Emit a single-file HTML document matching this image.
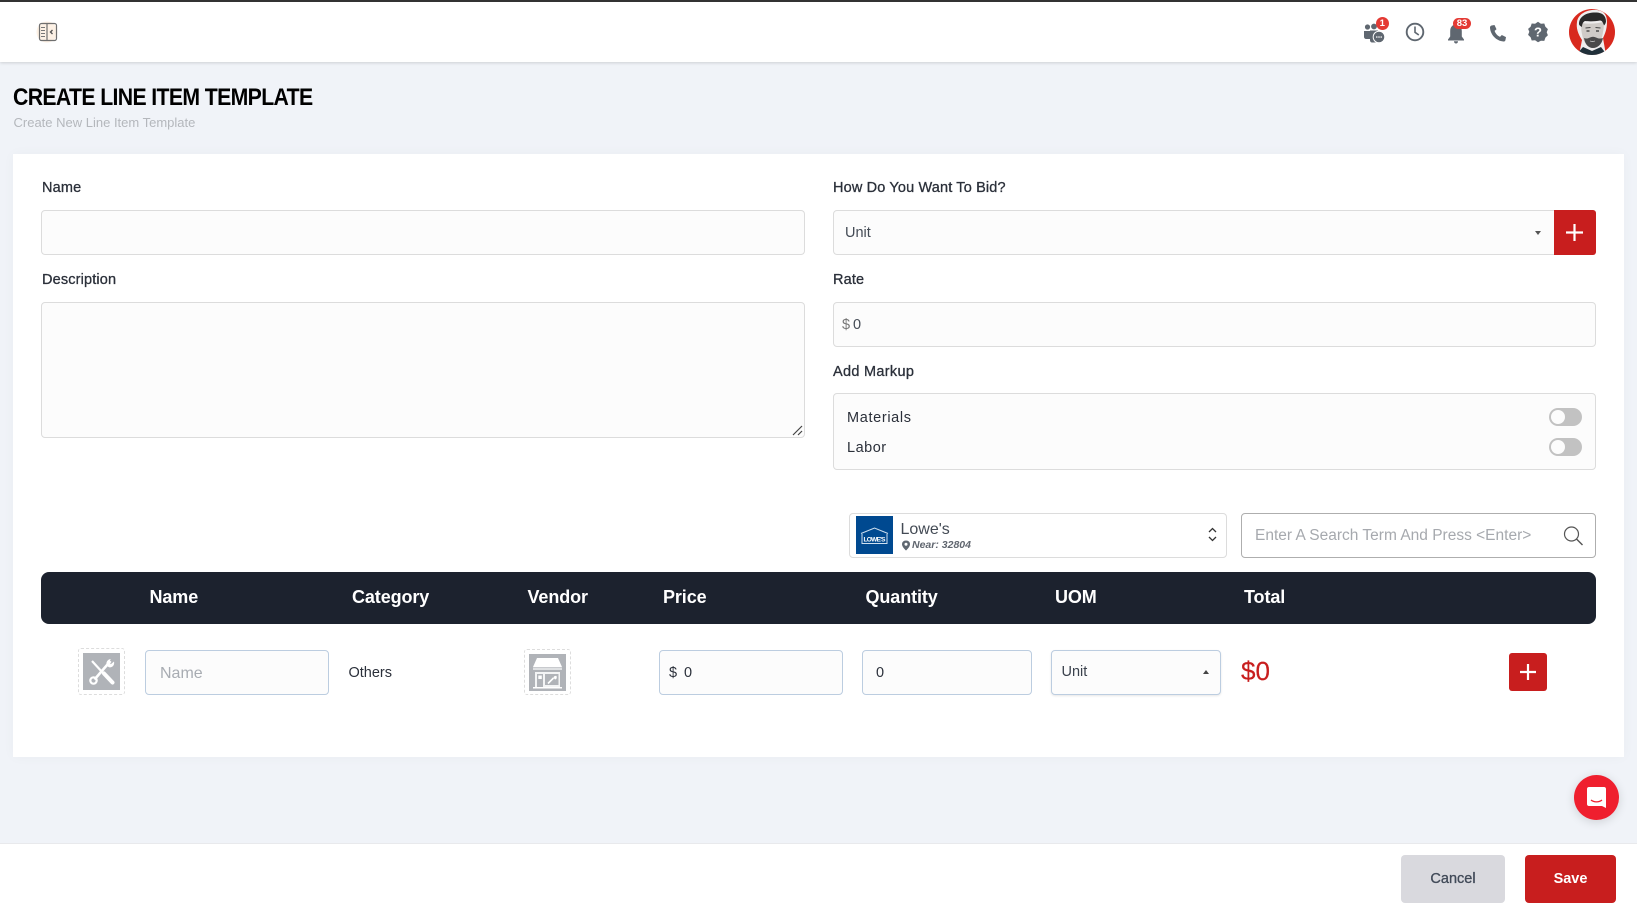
<!DOCTYPE html>
<html><head><meta charset="utf-8"><title>Create Line Item Template</title>
<style>
html,body{margin:0;padding:0;width:1637px;height:908px;overflow:hidden;background:#f0f3f8;font-family:"Liberation Sans",sans-serif;color:#2b303a}
.a{position:absolute;white-space:nowrap;line-height:1}
.box{position:absolute;box-sizing:border-box;background:#fcfcfc;border:1px solid #dcdcdc;border-radius:4px}
.rb{position:absolute;box-sizing:border-box;background:#fcfcfc;border:1px solid #bccde0;border-radius:4px}
.lb{font-size:14.5px;color:#2b303a;-webkit-text-stroke:.3px #2b303a;letter-spacing:.15px}
.th{font-size:18px;font-weight:bold;color:#fff;top:588.4px;letter-spacing:-.1px}
.tg{position:absolute;width:33px;height:18px;border-radius:9px;background:#c2c2c2}
.tg i{position:absolute;left:2px;top:2px;width:14px;height:14px;border-radius:50%;background:#fcfcfc}
svg{position:absolute;overflow:visible}
</style></head><body>
<div style="position:absolute;left:0;top:0;width:1637px;height:62px;background:#fff;box-shadow:0 1px 3px rgba(0,0,0,.15)"></div>
<div style="position:absolute;left:0;top:0;width:1637px;height:2px;background:#333"></div>

<svg style="left:36px;top:20px" width="24" height="24" viewBox="0 0 24 24"><circle cx="11" cy="12" r="10.5" fill="#fdf1e5"/><rect x="3.5" y="3.5" width="17" height="17" rx="2" fill="none" stroke="#6f6f6f" stroke-width="1.2"/><path d="M11 3.5V20.5" stroke="#6f6f6f" stroke-width="1.2"/><path d="M5 7.5H9M5 10.5H9M5 13.5H9M5 16.5H9" stroke="#777" stroke-width="1"/><path d="M16.5 10L14.5 12L16.5 14" fill="none" stroke="#555" stroke-width="1.4"/></svg>

<!-- group icon -->
<svg style="left:1362px;top:20px" width="26" height="26" viewBox="0 0 26 26"><g fill="#5f6770"><circle cx="5.5" cy="7" r="2.6"/><circle cx="12" cy="6.5" r="2.9"/><path d="M2 11h7v8H4c-1 0-2-1-2-2z"/><path d="M8 10.500h8v12H10c-1 0-2-1-2-2z"/><circle cx="17" cy="17" r="5.800" stroke="#fff" stroke-width="1"/></g><g fill="#fff"><circle cx="14.800" cy="17" r=".8"/><circle cx="17" cy="17" r=".8"/><circle cx="19.200" cy="17" r=".8"/></g></svg>
<div style="position:absolute;left:1375.500px;top:16.500px;width:13.500px;height:13.500px;border-radius:50%;background:#e43a34;color:#fff;font-size:9.500px;font-weight:bold;text-align:center;line-height:13.500px">1</div>
<!-- clock -->
<svg style="left:1404px;top:21px" width="22" height="22" viewBox="0 0 22 22"><circle cx="11" cy="11" r="8.300" fill="none" stroke="#5f6770" stroke-width="1.900"/><path d="M11 5.500V11.300L14.800 14" fill="none" stroke="#5f6770" stroke-width="1.600"/></svg>
<!-- bell -->
<svg style="left:1446px;top:22px" width="20" height="24" viewBox="0 0 20 24"><path d="M10 2.500c-3.800 0-5.800 3-5.800 6.500v5.500L2 17.500v1h16v-1l-2.200-3V9c0-3.500-2-6.500-5.800-6.500z" fill="#5f6770"/><path d="M8 19.300h4c0 1.500-.8 2.200-2 2.200s-2-.7-2-2.200z" fill="#5f6770"/></svg>
<div style="position:absolute;left:1453px;top:18px;width:18px;height:11px;border-radius:6px;background:#e43a34;color:#fff;font-size:9.500px;font-weight:bold;text-align:center;line-height:11px">83</div>
<!-- phone -->
<svg style="left:1488px;top:24px" width="20" height="20" viewBox="0 0 20 20"><path d="M3.500 1.500L6.500 1l2 4.200-1.900 1.700c.8 2.600 3 5 5.400 6l1.800-1.900 4.200 2.100-.6 3.200c-.2 1-1 1.300-2 1.200C8 16.800 2.700 10.800 2 4c-.1-1.200.4-2.200 1.500-2.500z" fill="#5f6770"/></svg>
<!-- help -->
<svg style="left:1527px;top:21px" width="22" height="22" viewBox="0 0 22 22"><path d="M11 .8l2.900 1.900 3.400-.2 1.100 3.300 2.500 2.300-1.200 3.100 1.200 3.100-2.500 2.300-1.100 3.300-3.400-.2L11 21.200l-2.900-1.900-3.400.2-1.100-3.300L1.100 13.900l1.200-3.100-1.200-2.900L3.600 5.800l1.100-3.300 3.400.2z" fill="#5f6770"/><text x="11" y="15.500" text-anchor="middle" font-family="Liberation Sans" font-weight="bold" font-size="13" fill="#fff">?</text></svg>
<!-- avatar -->
<svg style="left:1569px;top:9px" width="46" height="46" viewBox="0 0 46 46"><defs><clipPath id="c"><circle cx="23" cy="23" r="23"/></clipPath></defs><g clip-path="url(#c)"><rect width="46" height="46" fill="#d8291e"/><path d="M8 13C9 5 18 0 28 1c8 1 10 6 10 12 0 7-2 12-4 16l3 17H10l3-15C9 25 7 19 8 13z" fill="#efeeee"/><path d="M13 14c5 1 14 1 21-1 1 3 1 6 0 10-1 8-5 15-11 15-6 0-9-7-10-13-1-4-1-8 0-11z" fill="#cfcbc7"/><path d="M10 15C10 7 18 3 28 3.500c5 .3 9 3 9 9-.3 2-1 3-2 4-1-3-2-5-4-5-5 1-11 1-15 .5-2 1-3 3-3 6-2-1-3-2-3-3z" fill="#2a2a2a"/><path d="M16.500 19l5-.5M26.500 18.500l5 .5" stroke="#444" stroke-width="1.100"/><path d="M17.500 22h3M27 22h3" stroke="#333" stroke-width="1.200"/><path d="M15 29c1 6 4 10 9 10 5 0 9-4 10-10-3 1-5 .5-7-.5-2-1-4-1-6 0-2 1-4 1.500-6 .5z" fill="#4a4a4a"/><path d="M21 32c1.500.6 3.500.6 5 0" stroke="#bbb" stroke-width=".9"/><path d="M7 46l7-8 9 4 9-4 6 8z" fill="#20303a"/></g></svg>

<div class="a" style="left:13px;top:86px;font-size:24px;font-weight:bold;color:#000;letter-spacing:-.72px;transform:scaleX(.885);transform-origin:0 0">CREATE LINE ITEM TEMPLATE</div>
<div class="a" style="left:13.500px;top:116px;font-size:13px;color:#b4b7bc">Create New Line Item Template</div>

<div style="position:absolute;left:13px;top:154px;width:1611px;height:603px;background:#fff;box-shadow:0 0 12px rgba(0,0,0,.03)"></div>

<div class="a lb" style="left:42px;top:181px">Name</div>
<div class="box" style="left:41px;top:210px;width:764px;height:45px"></div>
<div class="a lb" style="left:42px;top:273px">Description</div>
<div class="box" style="left:41px;top:302px;width:764px;height:136px"></div>
<svg style="left:791px;top:424px" width="13" height="13" viewBox="0 0 13 13"><path d="M2 11L11 2M7 11L11 7" stroke="#444" stroke-width="1.200"/></svg>

<div class="a lb" style="left:833px;top:181px">How Do You Want To Bid?</div>
<div class="box" style="left:833px;top:210px;width:763px;height:45px"></div>
<div class="a" style="left:845px;top:226px;font-size:14.500px;color:#444b55">Unit</div>
<div style="position:absolute;left:1535px;top:231px;border:3px solid transparent;border-top:4px solid #555;border-bottom:0"></div>
<div style="position:absolute;left:1554px;top:210px;width:42px;height:45px;background:#c81e1e;border-radius:0 3px 3px 0"></div>
<svg style="left:1565px;top:223px" width="19" height="19"><path d="M9.500 1V18M1 9.500H18" stroke="#fff" stroke-width="2.200"/></svg>

<div class="a lb" style="left:833px;top:273px">Rate</div>
<div class="box" style="left:833px;top:302px;width:763px;height:45px"></div>
<div class="a" style="left:842px;top:318px;font-size:14.500px;color:#777">$</div>
<div class="a" style="left:853px;top:318px;font-size:14.500px;color:#444b55">0</div>

<div class="a lb" style="left:833px;top:365px;letter-spacing:.3px">Add Markup</div>
<div class="box" style="left:833px;top:393px;width:763px;height:77px"></div>
<div class="a" style="left:847px;top:410.500px;font-size:14.500px;color:#2b303a;letter-spacing:.65px">Materials</div>
<div class="a" style="left:847px;top:441px;font-size:14.500px;color:#2b303a;letter-spacing:.5px">Labor</div>
<div class="tg" style="left:1549px;top:408px"><i></i></div>
<div class="tg" style="left:1549px;top:438px"><i></i></div>

<div class="box" style="left:849px;top:513px;width:378px;height:45px;background:#fff"></div>
<div style="position:absolute;left:856px;top:516px;width:37px;height:38px;background:#004990"></div>
<svg style="left:856px;top:516px" width="37" height="38" viewBox="0 0 37 38"><path d="M5 17.500L18.500 12L32 17.500" fill="none" stroke="#cfe0f0" stroke-width="1"/><path d="M6 18V27.500H31V18" fill="none" stroke="#cfe0f0" stroke-width="1"/><text x="18.500" y="25.500" text-anchor="middle" font-family="Liberation Sans" font-weight="bold" font-size="6.500" fill="#fff" textLength="22">LOWE'S</text></svg>
<div class="a" style="left:900.500px;top:522px;font-size:16px;color:#444b55">Lowe's</div>
<svg style="left:901px;top:540px" width="10" height="11" viewBox="0 0 10 11"><path d="M5 .5C2.500.5 1 2.200 1 4.200 1 6.500 3.500 9 5 10.500 6.500 9 9 6.500 9 4.200 9 2.200 7.500.5 5 .5z" fill="#5f6770"/><circle cx="5" cy="4.200" r="1.500" fill="#fff"/></svg>
<div class="a" style="left:912px;top:540px;font-size:10.500px;font-style:italic;font-weight:bold;color:#60666f">Near: 32804</div>
<svg style="left:1207px;top:527px" width="11" height="15"><path d="M2 5L5.500 1.500L9 5M2 10L5.500 13.500L9 10" fill="none" stroke="#333" stroke-width="1.300"/></svg>

<div class="box" style="left:1241px;top:513px;width:355px;height:45px;background:#fff;border-color:#aeaeae"></div>
<div class="a" style="left:1255px;top:527.500px;font-size:15.500px;color:#a6a9ae">Enter A Search Term And Press &lt;Enter&gt;</div>
<svg style="left:1562px;top:525px" width="22" height="22"><circle cx="9.500" cy="9" r="7" fill="none" stroke="#555" stroke-width="1.200"/><path d="M14.500 14L20.500 20" stroke="#555" stroke-width="1.400"/></svg>

<div style="position:absolute;left:41px;top:572px;width:1555px;height:52px;background:#1c222e;border-radius:8px"></div>
<div class="a th" style="left:149.500px">Name</div>
<div class="a th" style="left:352px">Category</div>
<div class="a th" style="left:527.500px">Vendor</div>
<div class="a th" style="left:663px">Price</div>
<div class="a th" style="left:865.500px">Quantity</div>
<div class="a th" style="left:1055px">UOM</div>
<div class="a th" style="left:1244px">Total</div>

<div style="position:absolute;left:78px;top:648px;width:47px;height:47px;box-sizing:border-box;border:1px dashed #ddd;border-radius:3px"></div>
<div style="position:absolute;left:83px;top:653px;width:37px;height:37px;background:#b0b3b8"></div>
<svg style="left:83px;top:653px" width="37" height="37" viewBox="0 0 37 37"><path d="M9 8L20 20" stroke="#fff" stroke-width="2.200"/><path d="M21 20.500L29.500 29.500" stroke="#fff" stroke-width="4" stroke-linecap="round"/><path d="M27.500 8L11.500 26.500" stroke="#fff" stroke-width="2.600"/><path d="M31 8.500c.5 2.500-.3 5-3 5.800-2.300.4-4.500-1.300-4.600-3.600 0-2.500 1.900-4.500 4.400-4.700L26 9l1.800 2.300z" fill="#fff"/><circle cx="10.500" cy="27.500" r="3.200" fill="none" stroke="#fff" stroke-width="2.200"/></svg>

<div class="rb" style="left:145px;top:650px;width:184px;height:45px"></div>
<div class="a" style="left:160px;top:665.500px;font-size:16px;color:#a8acb2">Name</div>
<div class="a" style="left:348.500px;top:665.500px;font-size:14.500px;color:#2b303a">Others</div>

<div style="position:absolute;left:524px;top:649px;width:47px;height:46px;box-sizing:border-box;border:1px dashed #ddd;border-radius:3px"></div>
<div style="position:absolute;left:529px;top:654px;width:37px;height:37px;background:#b0b3b8"></div>
<svg style="left:529px;top:654px" width="37" height="37" viewBox="0 0 37 37"><path d="M8 4H29L33 13H4z" fill="#fff"/><path d="M4 13.500H33V16H4z" fill="#fff" opacity=".6"/><path d="M6 18H31V33H6z" fill="#fff" opacity=".85"/><path d="M4 33H33V34.500H4z" fill="#fff"/><path d="M8 20H14V33H8z" fill="#b0b3b8"/><path d="M9.300 21.500H12.800V25H9.300z" fill="#fff"/><path d="M16 20H29.500V31H16z" fill="#b0b3b8"/><path d="M19 29.500L24.500 24" stroke="#fff" stroke-width="1.600"/><path d="M27.500 22c-1.500-.4-3 .4-3 1.900l1.500 1.500c1.500 0 2.200-1.500 1.500-3.400z" fill="#fff"/></svg>

<div class="rb" style="left:659px;top:650px;width:184px;height:45px"></div>
<div class="a" style="left:669px;top:666px;font-size:14.500px;color:#2b303a">$</div>
<div class="a" style="left:684px;top:666px;font-size:14.500px;color:#2b303a">0</div>
<div class="rb" style="left:862px;top:650px;width:170px;height:45px"></div>
<div class="a" style="left:876px;top:666px;font-size:14.500px;color:#2b303a">0</div>
<div class="rb" style="left:1051px;top:650px;width:170px;height:45px;box-shadow:0 1px 2px rgba(0,0,0,.1)"></div>
<div class="a" style="left:1061.500px;top:665px;font-size:14.500px;color:#3b424d">Unit</div>
<div style="position:absolute;left:1203px;top:670px;border:3px solid transparent;border-bottom:4px solid #444;border-top:0"></div>
<div class="a" style="left:1241px;top:658px;font-size:26px;color:#c81e1e;-webkit-text-stroke:.2px #c81e1e">$0</div>
<div style="position:absolute;left:1509px;top:653px;width:38px;height:38px;background:#c81e1e;border-radius:3px"></div>
<svg style="left:1519px;top:663px" width="18" height="18"><path d="M9 1V17M1 9H17" stroke="#fff" stroke-width="2.200"/></svg>

<div style="position:absolute;left:0;top:843px;width:1637px;height:65px;background:#fff;border-top:1px solid #e8e9ec;box-sizing:border-box"></div>
<div style="position:absolute;left:1401px;top:855px;width:104px;height:48px;background:#d9d9de;border-radius:4px;color:#414a58;font-size:14.500px;text-align:center;line-height:49px;-webkit-text-stroke:.3px #414a58">Cancel</div>
<div style="position:absolute;left:1525px;top:855px;width:91px;height:48px;background:#c81e1e;border-radius:4px;color:#fff;font-size:14.500px;font-weight:bold;text-align:center;line-height:49px">Save</div>

<div style="position:absolute;left:1574px;top:775px;width:45px;height:45px;border-radius:50%;background:#ef1f2e;box-shadow:0 2px 10px rgba(0,0,0,.14)"></div>
<svg style="left:1586px;top:786px" width="22" height="24" viewBox="0 0 22 24"><path d="M3 1H18c1.200 0 2 .8 2 2V22l-4-2H3c-1.200 0-2-.8-2-2V3c0-1.200.8-2 2-2z" fill="#fff"/><path d="M5 14c3 2.500 8 2.500 11 0" fill="none" stroke="#ef1f2e" stroke-width="1.300"/></svg>
</body></html>
